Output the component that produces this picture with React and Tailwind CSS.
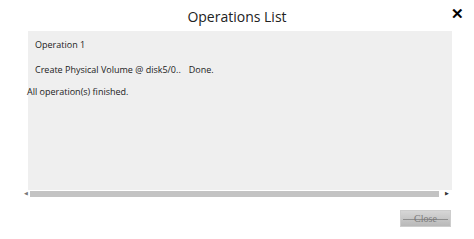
import React from 'react';

function App() {
  return (
    <div className="w-[474px] h-[239px] bg-white relative overflow-hidden" style={{ fontFamily: '"Open Sans", "Noto Sans", sans-serif' }}>
      <div className="h-[31px] flex items-center justify-center relative">
        <span className="text-[14px] text-[#222] pt-[1px]">Operations List</span>
        <span className="absolute right-[10px] top-[6px] text-[15px] font-bold text-black leading-none">✕</span>
      </div>
      <div className="ml-[28px] w-[424px] h-[167px] bg-[#efefef] flex flex-col">
        <div className="flex-1 text-[9px] text-[#222]">
          <div className="pl-[7px] pt-[7px]">Operation 1</div>
          <div className="pl-[7px] pt-[11px] flex">
            <span>Create Physical Volume @ disk5/0..</span>
            <span className="ml-[8px]">Done.</span>
          </div>
          <div className="pt-[9px] -ml-[1px]">All operation(s) finished.</div>
        </div>
        <div className="h-[8px] flex items-center -ml-[4px] bg-white">
          <span className="text-[5px] text-[#777] w-[6px]">◀</span>
          <div className="h-[6px] w-[409px] bg-[#c3c3c3]"></div>
          <span className="text-[5px] text-[#333] ml-[6px]">▶</span>
        </div>
      </div>
      <div className="flex justify-end pr-[23px] pt-[12px]">
        <div className="w-[51px] h-[17px] bg-gradient-to-b from-[#d6d6d6] to-[#b9b9b9] border border-[#cdcdcd] flex items-center justify-center relative">
          <div className="absolute left-[2px] right-[2px] top-[8px] h-px bg-[#8e8e8e]"></div>
          <span className="relative text-[10px] text-[#7a7a7a] px-[2px] leading-none" style={{ fontFamily: '"Liberation Serif", serif' }}>Close</span>
        </div>
      </div>
    </div>
  );
}

export default App;
